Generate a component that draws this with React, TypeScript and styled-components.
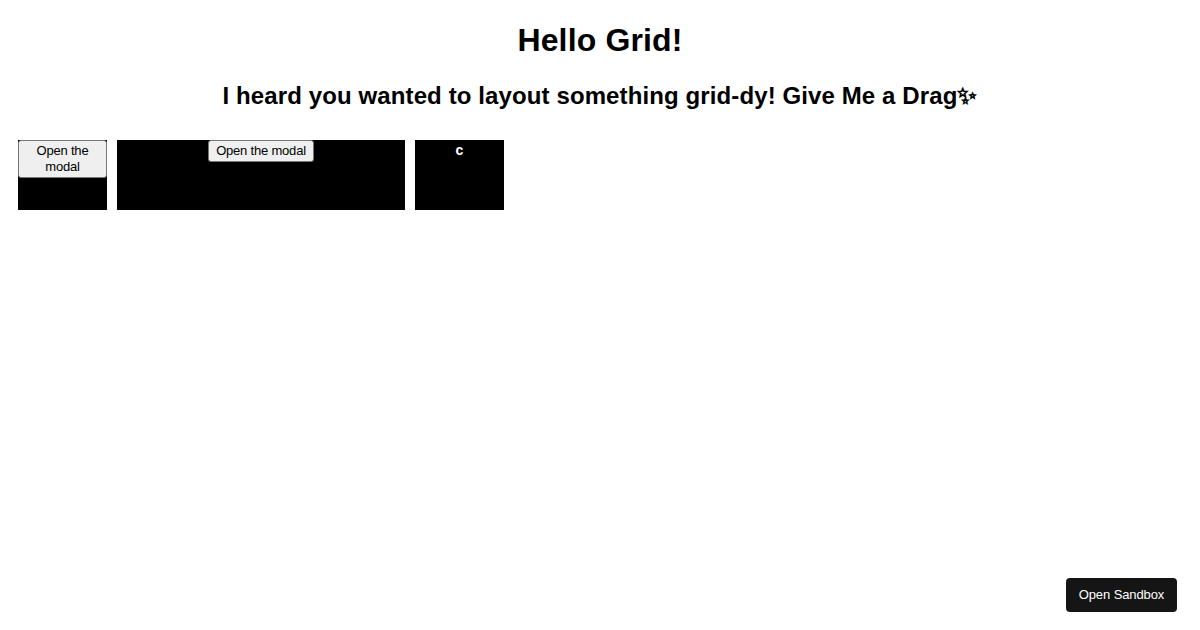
import React from "react";
import styled, { createGlobalStyle } from "styled-components";

const GlobalStyle = createGlobalStyle`
    html, body {
        margin: 0;
        background: #fff;
    }
    body {
        font-family: "Liberation Sans", Arial, sans-serif;
    }
`

const Page = styled.div`
    min-height: 630px;
    text-align: center;
    box-sizing: border-box;
    padding-top: 22px;
`

const Title = styled.h1`
    font-size: 32px;
    font-weight: bold;
    line-height: 37px;
    letter-spacing: 0.15px;
    margin: 0;
    color: #000;
`

const Subtitle = styled.h2`
    font-size: 24px;
    font-weight: bold;
    line-height: 28px;
    letter-spacing: 0.11px;
    margin: 23px 0 0;
    color: #000;
`

const Sparkle = styled.span`
    font-family: "DejaVu Sans", sans-serif;
    font-weight: bold;
    letter-spacing: 0;
    font-variant-emoji: text;
`

const Grid = styled.div`
    display: grid;
    grid-template-columns: 89px 288px 89px;
    grid-auto-rows: 70px;
    gap: 10px;
    margin: 30px 0 0 18px;
`

const Cell = styled.div`
    background: #000;
    color: #fff;
    font-size: 14px;
    font-weight: bold;
`

const CellLetter = styled.div`
    line-height: 21px;
`

const ModalButton = styled.button`
    font-family: "Liberation Sans", Arial, sans-serif;
    font-size: 13px;
    line-height: 16px;
    letter-spacing: -0.2px;
    color: #000;
    background: #efefef;
    border: 1px solid #767676;
    border-radius: 3px;
    padding: 2px 7px;
    display: inline-block;
    vertical-align: top;
`

const SandboxButton = styled.button`
    position: fixed;
    right: 23px;
    bottom: 18px;
    width: 111px;
    height: 34px;
    background: #151515;
    color: #fff;
    border: none;
    border-radius: 4px;
    font-family: "Liberation Sans", Arial, sans-serif;
    font-size: 13px;
    letter-spacing: -0.1px;
    padding: 0 0 2px;
`

export default function App(): React.ReactElement {
    return (
        <Page>
            <GlobalStyle/>
            <Title>Hello Grid!</Title>
            <Subtitle>I heard you wanted to layout something grid-dy! Give Me a Drag<Sparkle>{"\u2728\uFE0E"}</Sparkle></Subtitle>
            <Grid>
                <Cell><ModalButton>Open the modal</ModalButton></Cell>
                <Cell><ModalButton>Open the modal</ModalButton></Cell>
                <Cell><CellLetter>c</CellLetter></Cell>
            </Grid>
            <SandboxButton>Open Sandbox</SandboxButton>
        </Page>
    )
}
